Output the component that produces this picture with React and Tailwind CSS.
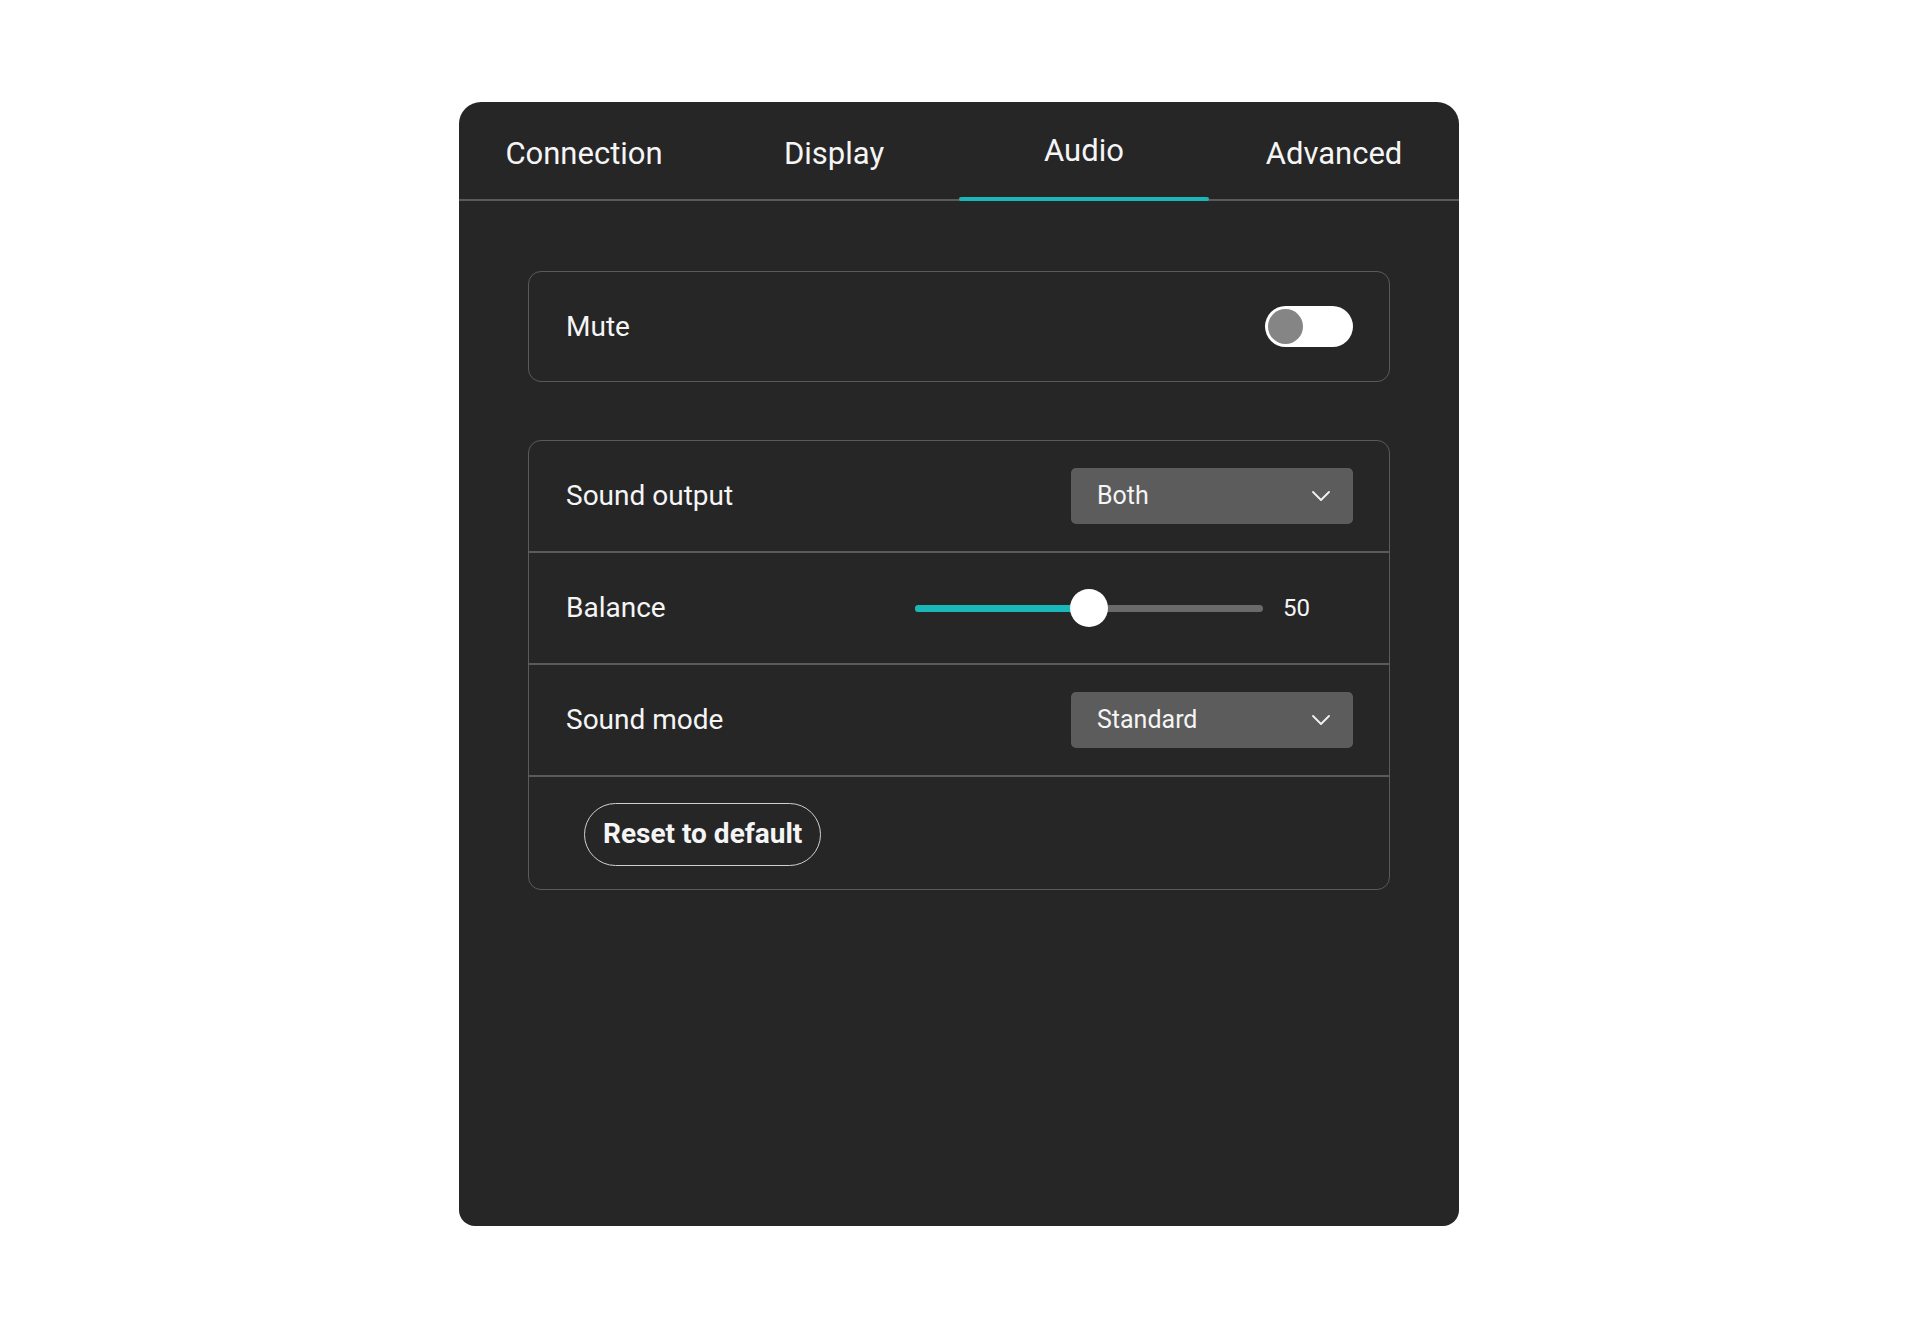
import { useState } from "react";

const tabs = ["Connection", "Display", "Audio", "Advanced"];

function Chevron() {
  return (
    <svg width="18" height="10" viewBox="0 0 18 10" fill="none">
      <polyline points="1,1 9,9 17,1" stroke="#f2f2f2" strokeWidth="1.8" strokeLinecap="round" strokeLinejoin="round" />
    </svg>
  );
}

function Select({ value }) {
  return (
    <button className="flex h-[56px] w-[282px] items-center justify-between rounded-[5px] bg-[#5c5c5c] pl-[26px] pr-[23px] text-[25px] text-[#f5f5f5]">
      <span>{value}</span>
      <Chevron />
    </button>
  );
}

function Row({ label, children, last }) {
  return (
    <div className={`flex h-[112px] items-center justify-between pl-[37px] pr-[36px] ${last ? "" : "border-b-2 border-[#5a5a5a]"}`}>
      <span className="text-[28px] text-[#f5f5f5]">{label}</span>
      {children}
    </div>
  );
}

export default function App() {
  const [active] = useState("Audio");
  const balance = 50;

  return (
    <div className="flex min-h-screen items-center justify-center bg-white" style={{ fontFamily: "Roboto, 'Noto Sans', sans-serif" }}>
      <div className="flex h-[1124px] w-[1000px] flex-col overflow-hidden rounded-t-[22px] rounded-b-[16px] bg-[#262626]">
        <div className="grid h-[99px] grid-cols-4 border-b-2 border-[#5a5a5a]">
          {tabs.map((t) => {
            const on = t === active;
            return (
              <div key={t} className={`relative flex items-center justify-center text-[31px] text-[#f5f5f5] ${on ? "pt-[2px]" : "pt-[7px]"}`}>
                {t}
                {on && <span className="absolute -bottom-[2px] left-0 right-0 h-[4px] rounded-full bg-[#19b7b9]" />}
              </div>
            );
          })}
        </div>

        <div className="flex flex-col gap-[58px] px-[69px] pt-[70px]">
          <div className="flex h-[111px] items-center justify-between rounded-[13px] border border-[#5a5a5a] pl-[37px] pr-[36px]">
            <span className="text-[28px] text-[#f5f5f5]">Mute</span>
            <div className="flex h-[41px] w-[88px] items-center rounded-full bg-white pl-[3px]">
              <span className="h-[35px] w-[35px] rounded-full bg-[#858585]" />
            </div>
          </div>

          <div className="flex flex-col rounded-[13px] border border-[#5a5a5a]">
            <Row label="Sound output">
              <Select value="Both" />
            </Row>
            <Row label="Balance">
              <div className="flex items-center gap-[20px] pr-[43px]">
                <div className="relative h-[7px] w-[348px] rounded-full bg-[#6a6a6a]">
                  <div className="h-full rounded-full bg-[#19b7b9]" style={{ width: `${balance}%` }} />
                  <span
                    className="absolute top-1/2 h-[38px] w-[38px] -translate-x-1/2 -translate-y-1/2 rounded-full bg-white"
                    style={{ left: `${balance}%` }}
                  />
                </div>
                <span className="text-[24px] text-[#f5f5f5]">{balance}</span>
              </div>
            </Row>
            <Row label="Sound mode">
              <Select value="Standard" />
            </Row>
            <div className="flex h-[112px] items-center pl-[55px] pt-[2px]">
              <button className="h-[63px] rounded-full border border-[#d0d0d0] px-[18px] text-[28px] font-bold text-[#f5f5f5]">
                Reset to default
              </button>
            </div>
          </div>
        </div>
      </div>
    </div>
  );
}
